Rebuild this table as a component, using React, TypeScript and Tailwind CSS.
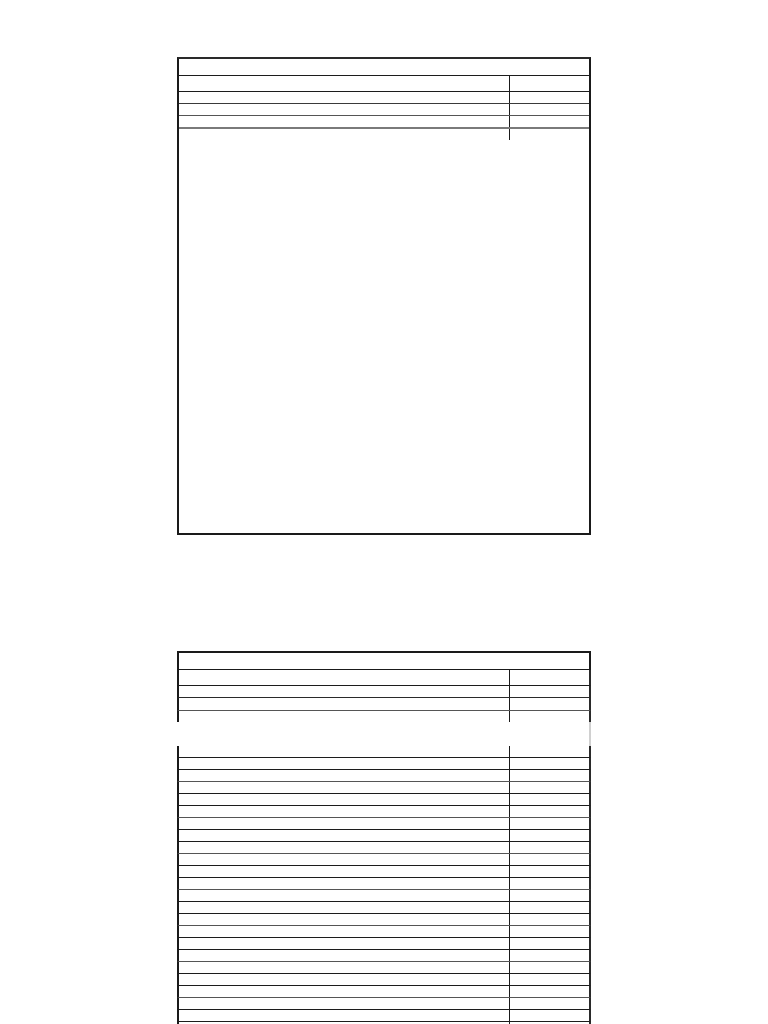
import React from "react";

function Row({ h, line = "border-[#1c1c1c]", bottom = true, divider = true, sides = true }: { h: string; line?: string; bottom?: boolean; divider?: boolean; sides?: boolean }) {
  return (
    <div className={`flex ${h} ${sides ? "border-l-2 border-r-2 border-l-[#1a1a1a] border-r-[#2a2a2a]" : "border-l-2 border-r-2 border-l-transparent border-r-[#d0d0d0]"} ${bottom ? `border-b ${line}` : ""}`}>
      <div className="flex-1" />
      <div className={`w-[80px] ${divider ? "border-l border-l-[#1a1a1a]" : ""}`} />
    </div>
  );
}

export default function App() {
  const rows2 = Array.from({ length: 23 });
  return (
    <div className="w-[768px] h-[1024px] overflow-hidden bg-white font-['Liberation_Sans',sans-serif]">
      <div className="flex flex-col pl-[177px] pt-[57px]">
        {/* Table 1 */}
        <div className="w-[414px] h-[478px] border-2 border-[#1a1a1a] border-t-[#2a2a2a] flex flex-col">
          <div className="h-[17px] border-b border-[#1c1c1c]" />
          <div className="flex h-[16px] border-b border-[#1c1c1c]">
            <div className="flex-1" />
            <div className="w-[80px] border-l border-l-[#1a1a1a]" />
          </div>
          <div className="flex h-[12px] border-b border-[#3a3a3a]">
            <div className="flex-1" />
            <div className="w-[80px] border-l border-l-[#1a1a1a]" />
          </div>
          <div className="flex h-[12px] border-b border-[#555]">
            <div className="flex-1" />
            <div className="w-[80px] border-l border-l-[#1a1a1a]" />
          </div>
          <div className="flex h-[13px] border-b-2 border-[#7a7a7a]">
            <div className="flex-1" />
            <div className="w-[80px] border-l border-l-[#1a1a1a]" />
          </div>
          <div className="flex h-[11px]">
            <div className="flex-1" />
            <div className="w-[80px] border-l border-l-[#1a1a1a]" />
          </div>
          <div className="flex-1" />
        </div>

        {/* Table 2 */}
        <div className="w-[414px] mt-[116px] flex flex-col">
          <div className="h-[19px] border-t-2 border-l-2 border-r-2 border-b border-[#1a1a1a]" />
          <Row h="h-[16px]" />
          <Row h="h-[12px]" line="border-[#2a2a2a]" />
          <Row h="h-[13px]" line="border-[#555]" />
          <Row h="h-[11px]" bottom={false} />
          <Row h="h-[24px]" bottom={false} divider={false} sides={false} />
          <Row h="h-[12px]" />
          {rows2.map((_, i) => (
            <Row key={i} h="h-[12px]" line={i % 3 === 1 ? "border-[#555]" : "border-[#1c1c1c]"} />
          ))}
        </div>
      </div>
    </div>
  );
}
